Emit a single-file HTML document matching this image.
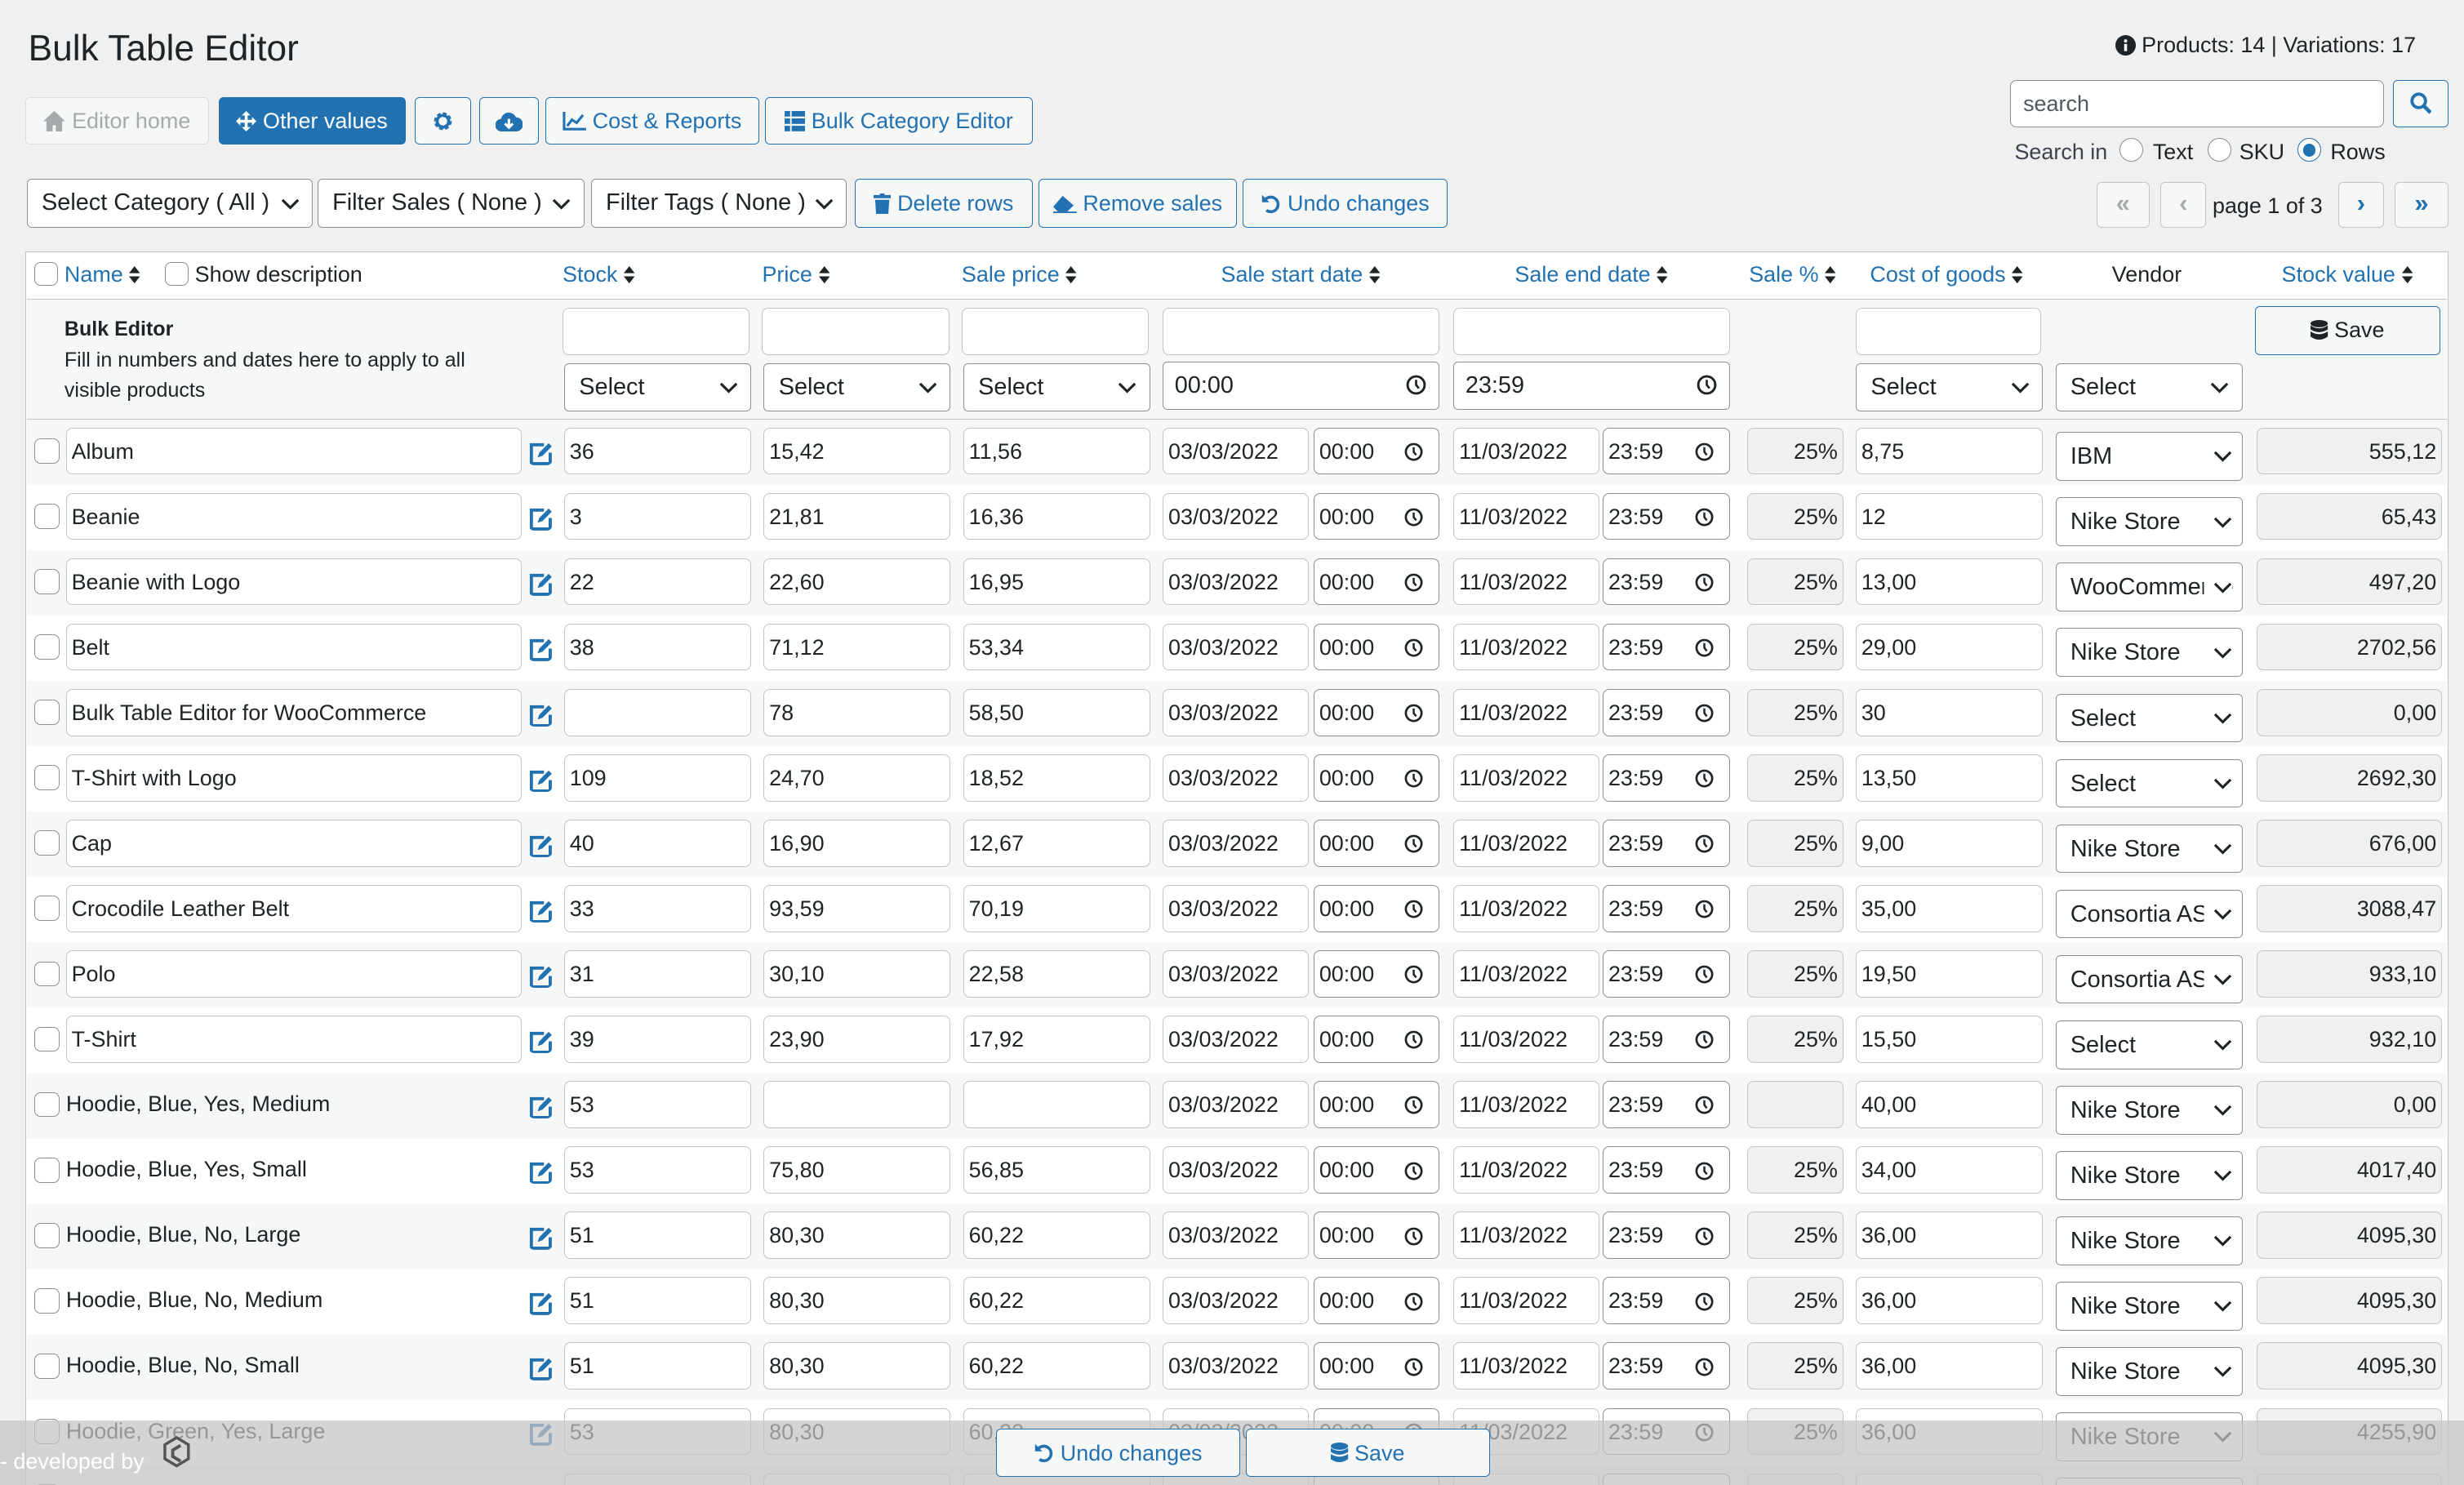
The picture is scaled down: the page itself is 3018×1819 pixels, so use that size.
<!DOCTYPE html>
<html><head><meta charset="utf-8"><style>
body{margin:0;background:#f0f0f1;overflow:hidden;width:3018px;height:1818px}
#p{zoom:1.9247;width:1568px;height:945px;position:relative;overflow:hidden;font-family:"Liberation Sans",sans-serif;font-size:14px;color:#1d2327}
.a{position:absolute}
.btn{position:absolute;top:62px;height:30px;border:1px solid #2271b1;border-radius:3px;background:#f6f7f7;color:#2271b1;box-sizing:border-box;display:flex;align-items:center;justify-content:center;gap:4px;font-size:14px}
.sel{position:absolute;height:31px;border:1px solid #8c8f94;border-radius:3px;background:#fff;box-sizing:border-box;padding-left:9px;line-height:30px;font-size:15px;white-space:nowrap;overflow:hidden}
.sel svg{position:absolute;right:8px;top:11px}
.fb{position:absolute;top:114px;height:31px;border:1px solid #2271b1;border-radius:3px;background:#f6f7f7;color:#2271b1;box-sizing:border-box;display:flex;align-items:center;justify-content:center;gap:4px}
.hd{position:absolute;top:167px;color:#2271b1;white-space:nowrap}
.hd svg{vertical-align:-1px;margin-left:4px}
.cbx{position:absolute;width:14px;height:14px;border:1px solid #8c8f94;border-radius:4px;background:#fff}
.r{position:absolute;left:17px;width:1540px;height:41.6px}
.g{background:#f6f7f7}
.w{background:#fff}
.r>div{position:absolute;top:5px;height:30px;box-sizing:border-box;border:1px solid #c3c4c7;border-radius:4px;background:#fff;line-height:30px;padding-left:3px;white-space:nowrap;overflow:hidden}
.r>.cb{top:12px;left:5px;width:16px;height:16px;border-color:#8c8f94;padding:0}
.r>.nm{left:25px;width:290px}
.r>.nt{left:25px;border:none;background:none;padding:0}
.r>.ed{left:319px;border:none;background:none;padding:0;top:11px;height:18px}
.r>.s1{left:342px;width:119px}
.r>.s2{left:469px;width:119px}
.r>.s3{left:596px;width:119px}
.r>.d1{left:723px;width:93px}
.r>.t1{left:819px;width:80px;border-color:#8c8f94}
.r>.d2{left:908px;width:93px}
.r>.t2{left:1003px;width:81px;border-color:#8c8f94}
.r>.pc{left:1095px;width:61px;background:#f0f0f1;text-align:right;padding-right:3px}
.r>.co{left:1164px;width:119px}
.r>.vd{left:1291px;width:119px;top:8px;height:31px;border-color:#8c8f94;border-radius:3px;padding-left:9px;line-height:31px;font-size:15px}
.r>.sv{left:1419px;width:118px;background:#f0f0f1;text-align:right;padding-right:3px}
.r>.t1 svg,.r>.t2 svg{position:absolute;right:10px;top:9px}
.r>.vd svg{position:absolute;right:6px;top:11px;background:#fff;box-shadow:-3px 0 0 3px #fff}
.pg{position:absolute;top:116px;height:29px;border:1px solid #c3c4c7;border-radius:3px;background:#f6f7f7;box-sizing:border-box;color:#2271b1;text-align:center;line-height:26px;font-size:16px;font-weight:bold}
</style></head><body><div id="p">
<svg width="0" height="0" style="position:absolute"><defs>
<symbol id="ck" viewBox="0 0 12 12"><circle cx="6" cy="6" r="5" fill="none" stroke="#1d2327" stroke-width="1.4"/><path d="M6 3v3l1.6 2" fill="none" stroke="#1d2327" stroke-width="1.3"/></symbol>
<symbol id="cv" viewBox="0 0 12 8"><path d="M1 1.5l5 5 5-5" fill="none" stroke="#1d2327" stroke-width="1.6"/></symbol>
<symbol id="so" viewBox="0 0 7 11"><path d="M0 4.5L3.5 0 7 4.5zM0 6.5L3.5 11 7 6.5z" fill="#1d2327"/></symbol>
<symbol id="ed" viewBox="0 0 16 16"><path d="M10 2H2v12h12V7" fill="none" stroke="#2271b1" stroke-width="2"/><path d="M6 10l1-3 6-6 2 2-6 6z" fill="#2271b1"/></symbol>
</defs></svg>

<div class="a" style="left:18px;top:18px;font-size:23px">Bulk Table Editor</div>
<div class="a" style="left:1346px;top:21px;font-size:14px"><svg width="13" height="13" viewBox="0 0 14 14" style="vertical-align:-2px"><circle cx="7" cy="7" r="7" fill="#1d2327"/><rect x="6" y="6" width="2" height="5" fill="#fff"/><circle cx="7" cy="4" r="1.1" fill="#fff"/></svg> Products: 14 | Variations: 17</div>

<div class="btn" style="left:16px;width:117px;border-color:#dcdcde;color:#a7aaad"><svg width="14" height="13" viewBox="0 0 14 13"><path d="M7 0L0 6.5h2V13h4V9h2v4h4V6.5h2z" fill="#a7aaad"/></svg>Editor home</div>
<div class="btn" style="left:139px;width:119px;background:#2271b1;color:#fff"><svg width="13" height="13" viewBox="0 0 14 14"><path d="M7 0l3 3H8v3h3V4l3 3-3 3V8H8v3h2l-3 3-3-3h2V8H3v2L0 7l3-3v2h3V3H4z" fill="#fff"/></svg>Other values</div>
<div class="btn" style="left:264px;width:36px"><svg width="13" height="13" viewBox="0 0 14 14"><circle cx="7" cy="7" r="4.5" fill="none" stroke="#2271b1" stroke-width="3.2" stroke-dasharray="2.2 1.3"/><circle cx="7" cy="7" r="4" fill="none" stroke="#2271b1" stroke-width="2"/></svg></div>
<div class="btn" style="left:305px;width:38px"><svg width="17" height="13" viewBox="0 0 17 13"><path d="M4 13a4 4 0 0 1-.5-8A5 5 0 0 1 13 4a4.5 4.5 0 0 1 0 9z" fill="#2271b1"/><path d="M8.5 5v5M6 8l2.5 2.5L11 8" stroke="#fff" stroke-width="1.6" fill="none"/></svg></div>
<div class="btn" style="left:347px;width:136px"><svg width="15" height="12" viewBox="0 0 15 12"><path d="M1 0v11h14" stroke="#2271b1" stroke-width="1.6" fill="none"/><path d="M3 9l3-4 3 2 4-5" stroke="#2271b1" stroke-width="1.6" fill="none"/></svg>Cost &amp; Reports</div>
<div class="btn" style="left:487px;width:170px"><svg width="13" height="13" viewBox="0 0 13 13" fill="#2271b1"><rect width="3.5" height="3.5"/><rect x="4.5" width="8.5" height="3.5"/><rect y="4.7" width="3.5" height="3.5"/><rect x="4.5" y="4.7" width="8.5" height="3.5"/><rect y="9.4" width="3.5" height="3.5"/><rect x="4.5" y="9.4" width="8.5" height="3.5"/></svg>Bulk Category Editor</div>

<div class="sel" style="left:17px;top:114px;width:182px">Select Category ( All )<svg width="12" height="8"><use href="#cv"/></svg></div>
<div class="sel" style="left:202px;top:114px;width:170px">Filter Sales ( None )<svg width="12" height="8"><use href="#cv"/></svg></div>
<div class="sel" style="left:376px;top:114px;width:163px">Filter Tags ( None )<svg width="12" height="8"><use href="#cv"/></svg></div>
<div class="fb" style="left:544px;width:113px"><svg width="11" height="13" viewBox="0 0 11 13" fill="#2271b1"><rect y="1" width="11" height="2"/><rect x="4" width="3" height="2"/><path d="M1 4h9l-.6 9H1.6z"/></svg>Delete rows</div>
<div class="fb" style="left:661px;width:126px"><svg width="15" height="12" viewBox="0 0 15 12"><path d="M6 1l7 6-4 4H3L0 8z" fill="#2271b1"/><path d="M0 11.5h15" stroke="#2271b1"/></svg>Remove sales</div>
<div class="fb" style="left:791px;width:130px"><svg width="13" height="13" viewBox="0 0 14 14"><path d="M3 4.5A5 5 0 1 1 4 11.5" fill="none" stroke="#2271b1" stroke-width="2"/><path d="M1 1v5h5z" fill="#2271b1"/></svg>Undo changes</div>

<div class="a" style="left:1279px;top:51px;width:238px;height:30px;border:1px solid #8c8f94;border-radius:4px;background:#fff;box-sizing:border-box;line-height:30px;padding-left:8px;color:#50575e">search</div>
<div class="a" style="left:1523px;top:51px;width:35px;height:30px;border:1px solid #2271b1;border-radius:3px;background:#f6f7f7;box-sizing:border-box"><svg width="14" height="14" viewBox="0 0 14 14" style="margin:7px 0 0 10px"><circle cx="5.5" cy="5.5" r="4.3" fill="none" stroke="#2271b1" stroke-width="2"/><path d="M8.5 8.5L13 13" stroke="#2271b1" stroke-width="2.4"/></svg></div>
<div class="a" style="left:1282px;top:89px;color:#3c434a">Search in</div>
<div class="a" style="left:1349px;top:88px;width:14px;height:14px;border:1px solid #8c8f94;border-radius:50%;background:#fff"></div>
<div class="a" style="left:1370px;top:89px">Text</div>
<div class="a" style="left:1405px;top:88px;width:14px;height:14px;border:1px solid #8c8f94;border-radius:50%;background:#fff"></div>
<div class="a" style="left:1425px;top:89px">SKU</div>
<div class="a" style="left:1462px;top:88px;width:14px;height:14px;border:1px solid #2271b1;border-radius:50%;background:#fff"><div style="margin:3px;width:8px;height:8px;border-radius:50%;background:#2271b1"></div></div>
<div class="a" style="left:1483px;top:89px">Rows</div>
<div class="pg" style="left:1334px;width:34px;color:#a7aaad">«</div>
<div class="pg" style="left:1375px;width:29px;color:#a7aaad">‹</div>
<div class="a" style="left:1408px;top:123px">page 1 of 3</div>
<div class="pg" style="left:1488px;width:29px">›</div>
<div class="pg" style="left:1524px;width:34px">»</div>

<div class="a" style="left:16px;top:160px;width:1542px;height:790px;border:1px solid #c3c4c7;border-bottom:none;background:#fff;box-sizing:border-box"></div>
<div class="a" style="left:17px;top:190px;width:1540px;height:77px;background:#f6f7f7;border-top:1px solid #c3c4c7;border-bottom:1px solid #c3c4c7;box-sizing:border-box"></div>
<div class="cbx" style="left:22px;top:167px"></div>
<div class="hd" style="left:41px">Name<svg width="7" height="11"><use href="#so"/></svg></div>
<div class="cbx" style="left:105px;top:167px"></div>
<div class="hd" style="left:124px;color:#1d2327">Show description</div>
<div class="hd" style="left:358px">Stock<svg width="7" height="11"><use href="#so"/></svg></div>
<div class="hd" style="left:485px">Price<svg width="7" height="11"><use href="#so"/></svg></div>
<div class="hd" style="left:612px">Sale price<svg width="7" height="11"><use href="#so"/></svg></div>
<div class="hd" style="left:777px">Sale start date<svg width="7" height="11"><use href="#so"/></svg></div>
<div class="hd" style="left:964px">Sale end date<svg width="7" height="11"><use href="#so"/></svg></div>
<div class="hd" style="left:1113px">Sale %<svg width="7" height="11"><use href="#so"/></svg></div>
<div class="hd" style="left:1190px">Cost of goods<svg width="7" height="11"><use href="#so"/></svg></div>
<div class="hd" style="left:1344px;color:#1d2327">Vendor</div>
<div class="hd" style="left:1452px">Stock value<svg width="7" height="11"><use href="#so"/></svg></div>

<div class="a" style="left:41px;top:202px;font-weight:bold;font-size:13px">Bulk Editor</div>
<div class="a" style="left:41px;top:220px;font-size:13px;line-height:19px;width:290px">Fill in numbers and dates here to apply to all visible products</div>
<div class="a" style="left:358px;top:196px;width:119px;height:30px;border:1px solid #c3c4c7;border-radius:4px;background:#fff;box-sizing:border-box"></div>
<div class="a" style="left:485px;top:196px;width:119px;height:30px;border:1px solid #c3c4c7;border-radius:4px;background:#fff;box-sizing:border-box"></div>
<div class="a" style="left:612px;top:196px;width:119px;height:30px;border:1px solid #c3c4c7;border-radius:4px;background:#fff;box-sizing:border-box"></div>
<div class="a" style="left:740px;top:196px;width:176px;height:30px;border:1px solid #c3c4c7;border-radius:4px;background:#fff;box-sizing:border-box"></div>
<div class="a" style="left:925px;top:196px;width:176px;height:30px;border:1px solid #c3c4c7;border-radius:4px;background:#fff;box-sizing:border-box"></div>
<div class="a" style="left:1181px;top:196px;width:118px;height:30px;border:1px solid #c3c4c7;border-radius:4px;background:#fff;box-sizing:border-box"></div>
<div class="a" style="left:1435px;top:195px;width:118px;height:31px;border:1px solid #2271b1;border-radius:3px;background:#f6f7f7;box-sizing:border-box;text-align:center;line-height:30px"><svg width="11" height="13" viewBox="0 0 11 13" style="vertical-align:-2px"><ellipse cx="5.5" cy="2.3" rx="5.5" ry="2.3" fill="#1d2327"/><path d="M0 3.5q5.5 3.5 11 0v2.5q-5.5 3.5-11 0zM0 7.3q5.5 3.5 11 0v3.2q-5.5 4-11 0z" fill="#1d2327"/></svg> Save</div>
<div class="sel" style="left:359px;top:231px;width:119px">Select<svg width="12" height="8"><use href="#cv"/></svg></div>
<div class="sel" style="left:486px;top:231px;width:119px">Select<svg width="12" height="8"><use href="#cv"/></svg></div>
<div class="sel" style="left:613px;top:231px;width:119px">Select<svg width="12" height="8"><use href="#cv"/></svg></div>
<div class="sel" style="left:740px;top:230px;width:176px;padding-left:7px">00:00<svg width="13" height="13" style="top:8px"><use href="#ck"/></svg></div>
<div class="sel" style="left:925px;top:230px;width:176px;padding-left:7px">23:59<svg width="13" height="13" style="top:8px"><use href="#ck"/></svg></div>
<div class="sel" style="left:1181px;top:231px;width:119px">Select<svg width="12" height="8"><use href="#cv"/></svg></div>
<div class="sel" style="left:1308px;top:231px;width:119px">Select<svg width="12" height="8"><use href="#cv"/></svg></div>

<div class="r g" style="top:267px"><div class="cb"></div><div class="nm">Album</div><div class="ed"><svg width="16" height="16"><use href="#ed"/></svg></div><div class="s1">36</div><div class="s2">15,42</div><div class="s3">11,56</div><div class="d1">03/03/2022</div><div class="t1">00:00<svg width="12" height="12"><use href="#ck"/></svg></div><div class="d2">11/03/2022</div><div class="t2">23:59<svg width="12" height="12"><use href="#ck"/></svg></div><div class="pc">25%</div><div class="co">8,75</div><div class="vd">IBM<svg width="12" height="8"><use href="#cv"/></svg></div><div class="sv">555,12</div></div>
<div class="r w" style="top:308.6px"><div class="cb"></div><div class="nm">Beanie</div><div class="ed"><svg width="16" height="16"><use href="#ed"/></svg></div><div class="s1">3</div><div class="s2">21,81</div><div class="s3">16,36</div><div class="d1">03/03/2022</div><div class="t1">00:00<svg width="12" height="12"><use href="#ck"/></svg></div><div class="d2">11/03/2022</div><div class="t2">23:59<svg width="12" height="12"><use href="#ck"/></svg></div><div class="pc">25%</div><div class="co">12</div><div class="vd">Nike Store<svg width="12" height="8"><use href="#cv"/></svg></div><div class="sv">65,43</div></div>
<div class="r g" style="top:350.2px"><div class="cb"></div><div class="nm">Beanie with Logo</div><div class="ed"><svg width="16" height="16"><use href="#ed"/></svg></div><div class="s1">22</div><div class="s2">22,60</div><div class="s3">16,95</div><div class="d1">03/03/2022</div><div class="t1">00:00<svg width="12" height="12"><use href="#ck"/></svg></div><div class="d2">11/03/2022</div><div class="t2">23:59<svg width="12" height="12"><use href="#ck"/></svg></div><div class="pc">25%</div><div class="co">13,00</div><div class="vd">WooCommerce<svg width="12" height="8"><use href="#cv"/></svg></div><div class="sv">497,20</div></div>
<div class="r w" style="top:391.8px"><div class="cb"></div><div class="nm">Belt</div><div class="ed"><svg width="16" height="16"><use href="#ed"/></svg></div><div class="s1">38</div><div class="s2">71,12</div><div class="s3">53,34</div><div class="d1">03/03/2022</div><div class="t1">00:00<svg width="12" height="12"><use href="#ck"/></svg></div><div class="d2">11/03/2022</div><div class="t2">23:59<svg width="12" height="12"><use href="#ck"/></svg></div><div class="pc">25%</div><div class="co">29,00</div><div class="vd">Nike Store<svg width="12" height="8"><use href="#cv"/></svg></div><div class="sv">2702,56</div></div>
<div class="r g" style="top:433.4px"><div class="cb"></div><div class="nm">Bulk Table Editor for WooCommerce</div><div class="ed"><svg width="16" height="16"><use href="#ed"/></svg></div><div class="s1"></div><div class="s2">78</div><div class="s3">58,50</div><div class="d1">03/03/2022</div><div class="t1">00:00<svg width="12" height="12"><use href="#ck"/></svg></div><div class="d2">11/03/2022</div><div class="t2">23:59<svg width="12" height="12"><use href="#ck"/></svg></div><div class="pc">25%</div><div class="co">30</div><div class="vd">Select<svg width="12" height="8"><use href="#cv"/></svg></div><div class="sv">0,00</div></div>
<div class="r w" style="top:475px"><div class="cb"></div><div class="nm">T-Shirt with Logo</div><div class="ed"><svg width="16" height="16"><use href="#ed"/></svg></div><div class="s1">109</div><div class="s2">24,70</div><div class="s3">18,52</div><div class="d1">03/03/2022</div><div class="t1">00:00<svg width="12" height="12"><use href="#ck"/></svg></div><div class="d2">11/03/2022</div><div class="t2">23:59<svg width="12" height="12"><use href="#ck"/></svg></div><div class="pc">25%</div><div class="co">13,50</div><div class="vd">Select<svg width="12" height="8"><use href="#cv"/></svg></div><div class="sv">2692,30</div></div>
<div class="r g" style="top:516.6px"><div class="cb"></div><div class="nm">Cap</div><div class="ed"><svg width="16" height="16"><use href="#ed"/></svg></div><div class="s1">40</div><div class="s2">16,90</div><div class="s3">12,67</div><div class="d1">03/03/2022</div><div class="t1">00:00<svg width="12" height="12"><use href="#ck"/></svg></div><div class="d2">11/03/2022</div><div class="t2">23:59<svg width="12" height="12"><use href="#ck"/></svg></div><div class="pc">25%</div><div class="co">9,00</div><div class="vd">Nike Store<svg width="12" height="8"><use href="#cv"/></svg></div><div class="sv">676,00</div></div>
<div class="r w" style="top:558.2px"><div class="cb"></div><div class="nm">Crocodile Leather Belt</div><div class="ed"><svg width="16" height="16"><use href="#ed"/></svg></div><div class="s1">33</div><div class="s2">93,59</div><div class="s3">70,19</div><div class="d1">03/03/2022</div><div class="t1">00:00<svg width="12" height="12"><use href="#ck"/></svg></div><div class="d2">11/03/2022</div><div class="t2">23:59<svg width="12" height="12"><use href="#ck"/></svg></div><div class="pc">25%</div><div class="co">35,00</div><div class="vd">Consortia AS<svg width="12" height="8"><use href="#cv"/></svg></div><div class="sv">3088,47</div></div>
<div class="r g" style="top:599.8px"><div class="cb"></div><div class="nm">Polo</div><div class="ed"><svg width="16" height="16"><use href="#ed"/></svg></div><div class="s1">31</div><div class="s2">30,10</div><div class="s3">22,58</div><div class="d1">03/03/2022</div><div class="t1">00:00<svg width="12" height="12"><use href="#ck"/></svg></div><div class="d2">11/03/2022</div><div class="t2">23:59<svg width="12" height="12"><use href="#ck"/></svg></div><div class="pc">25%</div><div class="co">19,50</div><div class="vd">Consortia AS<svg width="12" height="8"><use href="#cv"/></svg></div><div class="sv">933,10</div></div>
<div class="r w" style="top:641.4px"><div class="cb"></div><div class="nm">T-Shirt</div><div class="ed"><svg width="16" height="16"><use href="#ed"/></svg></div><div class="s1">39</div><div class="s2">23,90</div><div class="s3">17,92</div><div class="d1">03/03/2022</div><div class="t1">00:00<svg width="12" height="12"><use href="#ck"/></svg></div><div class="d2">11/03/2022</div><div class="t2">23:59<svg width="12" height="12"><use href="#ck"/></svg></div><div class="pc">25%</div><div class="co">15,50</div><div class="vd">Select<svg width="12" height="8"><use href="#cv"/></svg></div><div class="sv">932,10</div></div>
<div class="r g" style="top:683px"><div class="cb"></div><div class="nt">Hoodie, Blue, Yes, Medium</div><div class="ed"><svg width="16" height="16"><use href="#ed"/></svg></div><div class="s1">53</div><div class="s2"></div><div class="s3"></div><div class="d1">03/03/2022</div><div class="t1">00:00<svg width="12" height="12"><use href="#ck"/></svg></div><div class="d2">11/03/2022</div><div class="t2">23:59<svg width="12" height="12"><use href="#ck"/></svg></div><div class="pc"></div><div class="co">40,00</div><div class="vd">Nike Store<svg width="12" height="8"><use href="#cv"/></svg></div><div class="sv">0,00</div></div>
<div class="r w" style="top:724.6px"><div class="cb"></div><div class="nt">Hoodie, Blue, Yes, Small</div><div class="ed"><svg width="16" height="16"><use href="#ed"/></svg></div><div class="s1">53</div><div class="s2">75,80</div><div class="s3">56,85</div><div class="d1">03/03/2022</div><div class="t1">00:00<svg width="12" height="12"><use href="#ck"/></svg></div><div class="d2">11/03/2022</div><div class="t2">23:59<svg width="12" height="12"><use href="#ck"/></svg></div><div class="pc">25%</div><div class="co">34,00</div><div class="vd">Nike Store<svg width="12" height="8"><use href="#cv"/></svg></div><div class="sv">4017,40</div></div>
<div class="r g" style="top:766.2px"><div class="cb"></div><div class="nt">Hoodie, Blue, No, Large</div><div class="ed"><svg width="16" height="16"><use href="#ed"/></svg></div><div class="s1">51</div><div class="s2">80,30</div><div class="s3">60,22</div><div class="d1">03/03/2022</div><div class="t1">00:00<svg width="12" height="12"><use href="#ck"/></svg></div><div class="d2">11/03/2022</div><div class="t2">23:59<svg width="12" height="12"><use href="#ck"/></svg></div><div class="pc">25%</div><div class="co">36,00</div><div class="vd">Nike Store<svg width="12" height="8"><use href="#cv"/></svg></div><div class="sv">4095,30</div></div>
<div class="r w" style="top:807.8px"><div class="cb"></div><div class="nt">Hoodie, Blue, No, Medium</div><div class="ed"><svg width="16" height="16"><use href="#ed"/></svg></div><div class="s1">51</div><div class="s2">80,30</div><div class="s3">60,22</div><div class="d1">03/03/2022</div><div class="t1">00:00<svg width="12" height="12"><use href="#ck"/></svg></div><div class="d2">11/03/2022</div><div class="t2">23:59<svg width="12" height="12"><use href="#ck"/></svg></div><div class="pc">25%</div><div class="co">36,00</div><div class="vd">Nike Store<svg width="12" height="8"><use href="#cv"/></svg></div><div class="sv">4095,30</div></div>
<div class="r g" style="top:849.4px"><div class="cb"></div><div class="nt">Hoodie, Blue, No, Small</div><div class="ed"><svg width="16" height="16"><use href="#ed"/></svg></div><div class="s1">51</div><div class="s2">80,30</div><div class="s3">60,22</div><div class="d1">03/03/2022</div><div class="t1">00:00<svg width="12" height="12"><use href="#ck"/></svg></div><div class="d2">11/03/2022</div><div class="t2">23:59<svg width="12" height="12"><use href="#ck"/></svg></div><div class="pc">25%</div><div class="co">36,00</div><div class="vd">Nike Store<svg width="12" height="8"><use href="#cv"/></svg></div><div class="sv">4095,30</div></div>
<div class="r w" style="top:891px"><div class="cb"></div><div class="nt">Hoodie, Green, Yes, Large</div><div class="ed"><svg width="16" height="16"><use href="#ed"/></svg></div><div class="s1">53</div><div class="s2">80,30</div><div class="s3">60,22</div><div class="d1">03/03/2022</div><div class="t1">00:00<svg width="12" height="12"><use href="#ck"/></svg></div><div class="d2">11/03/2022</div><div class="t2">23:59<svg width="12" height="12"><use href="#ck"/></svg></div><div class="pc">25%</div><div class="co">36,00</div><div class="vd">Nike Store<svg width="12" height="8"><use href="#cv"/></svg></div><div class="sv">4255,90</div></div>
<div class="r g" style="top:932.6px"><div class="cb"></div><div class="s1"></div><div class="s2"></div><div class="s3"></div><div class="d1"></div><div class="t1"></div><div class="d2"></div><div class="t2"></div><div class="pc"></div><div class="co"></div><div class="vd"></div><div class="sv"></div></div>

<div class="a" style="left:0;top:904px;width:1568px;height:41px;background:rgba(195,195,195,0.72)"></div>
<div class="a" style="left:0;top:922px;color:#fff;font-size:14px">- developed by</div>
<svg class="a" style="left:104px;top:914px" width="17" height="20" viewBox="0 0 17 20"><path d="M8.5 1L16 5.5v9L8.5 19 1 14.5v-9z" fill="none" stroke="#555" stroke-width="1.8"/><path d="M11 6L6 9v4l5 3" fill="none" stroke="#555" stroke-width="2"/></svg>
<div class="a" style="left:634px;top:909px;width:155px;height:31px;border:1px solid #2271b1;border-radius:3px;background:#f6f7f7;box-sizing:border-box;color:#2271b1;text-align:center;line-height:31px"><svg width="13" height="13" viewBox="0 0 14 14" style="vertical-align:-2px"><path d="M3 4.5A5 5 0 1 1 4 11.5" fill="none" stroke="#2271b1" stroke-width="2"/><path d="M1 1v5h5z" fill="#2271b1"/></svg> Undo changes</div>
<div class="a" style="left:793px;top:909px;width:155px;height:31px;border:1px solid #2271b1;border-radius:3px;background:#f6f7f7;box-sizing:border-box;color:#2271b1;text-align:center;line-height:31px"><svg width="11" height="13" viewBox="0 0 11 13" style="vertical-align:-2px"><ellipse cx="5.5" cy="2.3" rx="5.5" ry="2.3" fill="#2271b1"/><path d="M0 3.5q5.5 3.5 11 0v2.5q-5.5 3.5-11 0zM0 7.3q5.5 3.5 11 0v3.2q-5.5 4-11 0z" fill="#2271b1"/></svg> Save</div>
</div></body></html>
